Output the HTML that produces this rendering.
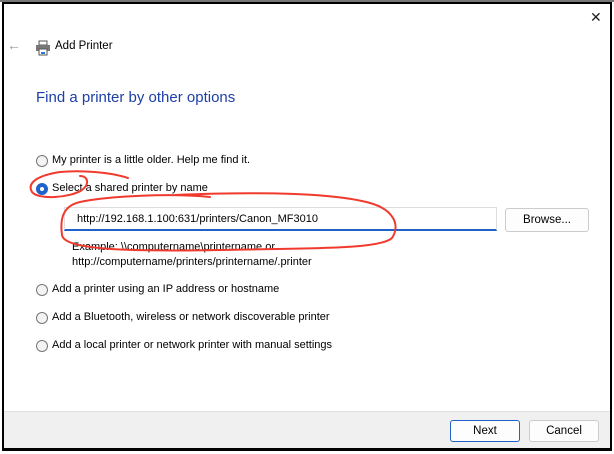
<!DOCTYPE html>
<html><head><style>
*{margin:0;padding:0;box-sizing:border-box}
body{width:614px;height:454px;background:#fff;position:relative;overflow:hidden;font-family:"Liberation Sans",sans-serif;font-size:11px;color:#000}
.win{position:absolute;left:2px;top:2px;width:610px;height:449px;border:2px solid #000;border-bottom-width:3px;background:#fff}
.a{position:absolute;white-space:nowrap}
.r{position:absolute;width:12px;height:12px;border:1px solid #777;border-radius:50%;background:#f4f4f4}
.footer{position:absolute;left:0;right:0;bottom:0;height:37px;background:#f0f0f0;border-top:1px solid #dfdfdf}
.btn{position:absolute;height:22px;border:1px solid #ccc;border-radius:3px;background:#fdfdfd;text-align:center;line-height:20px;font-size:11.5px}
</style></head><body>
<div style="position:absolute;left:0;top:0;width:614px;height:2px;background:#777"></div>
<div class="win">
<div class="a" style="left:586px;top:5px;font-size:14px;color:#222">✕</div>
<div class="a" style="left:3px;top:33px;font-size:14px;color:#999">←</div>
<svg class="a" style="left:31px;top:36px" width="16" height="16" viewBox="0 0 16 16"><rect x="4" y="1" width="8" height="4" fill="#fff" stroke="#555"/><rect x="1" y="5" width="14" height="6" fill="#777"/><rect x="4" y="9" width="8" height="6" fill="#fff" stroke="#555"/><rect x="6" y="12" width="4" height="2" fill="#2a7ad5"/></svg>
<div class="a" style="left:51px;top:36px;font-size:11.5px">Add Printer</div>
<div class="a" style="left:32px;top:85px;font-size:15px;color:#1c3fa8">Find a printer by other options</div>

<div class="r" style="left:32px;top:151px"></div>
<div class="a" style="left:48px;top:150px">My printer is a little older. Help me find it.</div>
<div class="r" style="left:32px;top:179px;border:4px solid #1f62c9;background:#fff"></div>
<div class="a" style="left:48px;top:178px">Select a shared printer by name</div>

<div class="a" style="left:60px;top:203px;width:433px;height:24px;border:1px solid #ddd;border-bottom:2px solid #1f62c9;background:#fff;padding:5px 0 0 12px">http://192.168.1.100:631/printers/Canon_MF3010</div>
<div class="btn" style="left:501px;top:204px;width:84px;height:24px;line-height:22px">Browse...</div>
<div class="a" style="left:68px;top:236px;line-height:15px">Example: \\computername\printername or<br>http://computername/printers/printername/.printer</div>

<div class="r" style="left:32px;top:280px"></div>
<div class="a" style="left:48px;top:279px">Add a printer using an IP address or hostname</div>
<div class="r" style="left:32px;top:308px"></div>
<div class="a" style="left:48px;top:307px">Add a Bluetooth, wireless or network discoverable printer</div>
<div class="r" style="left:32px;top:336px"></div>
<div class="a" style="left:48px;top:335px">Add a local printer or network printer with manual settings</div>

<div class="footer">
<div class="btn" style="left:446px;top:8px;width:70px;border-color:#1f62c9">Next</div>
<div class="btn" style="left:525px;top:8px;width:70px">Cancel</div>
</div>
</div>
<svg class="a" style="left:0;top:0" width="614" height="454">
<g fill="none" stroke="#f03a2e" stroke-width="2" stroke-linecap="round">
<path d="M128 178 C110 172 80 170 60 172 C40 175 26 182 32 192 C38 200 70 198 82 190 C90 184 88 176 80 176"/>
<path d="M210 197 C170 193 110 196 80 202 C62 206 60 220 62 235 C64 248 110 252 220 250 C300 248 380 250 392 238 C400 226 395 210 370 203 C330 192 250 192 175 195"/>
</g></svg>
</body></html>
